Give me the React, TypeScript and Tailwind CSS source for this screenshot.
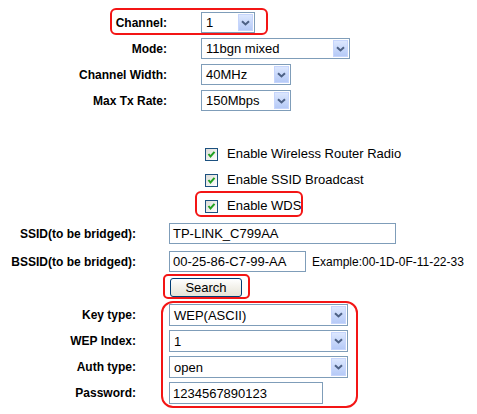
import React from 'react';

function Chevron() {
  return (
    <svg width="9" height="6" viewBox="0 0 9 6">
      <path d="M1 1.2 L4.5 4.5 L8 1.2" fill="none" stroke="#4d6185" strokeWidth="2" />
    </svg>
  );
}

function Select({ value, width, height }: { value: string; width: string; height: string }) {
  return (
    <div className={`${width} ${height} flex items-center border border-[#7f9db9] bg-white`}>
      <span className="flex-1 pl-[4px] text-[13px] leading-none">{value}</span>
      <span className="mr-[1px] flex h-[calc(100%-2px)] w-[15px] items-center justify-center border border-[#c6d5fc] bg-linear-to-b from-[#dce7fe] to-[#b6caf7]">
        <Chevron />
      </span>
    </div>
  );
}

function TextBox({ value, width, height }: { value: string; width: string; height: string }) {
  return (
    <div className={`${width} ${height} flex items-center border border-[#7f9db9] bg-white pl-[3px] text-[13px] leading-none`}>
      {value}
    </div>
  );
}

function Checkbox() {
  return (
    <span className="flex h-[13px] w-[13px] items-center justify-center border border-[#1c5180] bg-linear-to-br from-[#dcdcd7] to-white">
      <svg width="9" height="9" viewBox="0 0 9 9">
        <path d="M1.5 4 L3.5 6.5 L7.5 1.8" fill="none" stroke="#21a121" strokeWidth="2" />
      </svg>
    </span>
  );
}

function TopRow({ label, children }: { label: string; children: React.ReactNode }) {
  return (
    <div className="flex h-[21px] items-center">
      <div className="w-[167px] text-right text-[12px] font-bold">{label}</div>
      <div className="ml-[34px] flex h-full">{children}</div>
    </div>
  );
}

function BottomRow({ label, h, children }: { label: string; h: string; children: React.ReactNode }) {
  return (
    <div className={`flex ${h} items-center`}>
      <div className="w-[136px] text-right text-[12px] font-bold">{label}</div>
      <div className="ml-[33px] flex h-full items-center">{children}</div>
    </div>
  );
}

function CheckRow({ label }: { label: string }) {
  return (
    <div className="flex h-[26px] items-center pl-[205px]">
      <Checkbox />
      <span className="ml-[9px] text-[13px]">{label}</span>
    </div>
  );
}

export default function App() {
  return (
    <div className="relative h-[414px] w-[477px] overflow-hidden bg-white font-['Liberation_Sans',Arial,sans-serif] text-black">
      <div className="flex flex-col gap-[5px] pt-[12px]">
        <TopRow label="Channel:">
          <Select value="1" width="w-[54px]" height="h-[21px]" />
        </TopRow>
        <TopRow label="Mode:">
          <Select value="11bgn mixed" width="w-[149px]" height="h-[21px]" />
        </TopRow>
        <TopRow label="Channel Width:">
          <Select value="40MHz" width="w-[90px]" height="h-[21px]" />
        </TopRow>
        <TopRow label="Max Tx Rate:">
          <Select value="150Mbps" width="w-[90px]" height="h-[21px]" />
        </TopRow>
      </div>

      <div className="mt-[30px] flex flex-col">
        <CheckRow label="Enable Wireless Router Radio" />
        <CheckRow label="Enable SSID Broadcast" />
        <CheckRow label="Enable WDS" />
      </div>

      <div className="mt-[4px] flex flex-col gap-[7px]">
        <BottomRow label="SSID(to be bridged):" h="h-[21px]">
          <TextBox value="TP-LINK_C799AA" width="w-[227px]" height="h-[21px]" />
        </BottomRow>
        <BottomRow label="BSSID(to be bridged):" h="h-[21px]">
          <TextBox value="00-25-86-C7-99-AA" width="w-[137px]" height="h-[21px]" />
          <span className="ml-[6px] text-[12px]">Example:00-1D-0F-11-22-33</span>
        </BottomRow>
      </div>

      <div className="mt-[6px] flex pl-[170px]">
        <button className="flex h-[19px] w-[72px] items-center justify-center rounded-[3px] border border-[#003c74] bg-linear-to-b from-white to-[#e6e3d6] text-[13px] leading-none">
          Search
        </button>
      </div>

      <div className="mt-[7px] flex flex-col gap-[4px]">
        <BottomRow label="Key type:" h="h-[22px]">
          <Select value="WEP(ASCII)" width="w-[179px]" height="h-[22px]" />
        </BottomRow>
        <BottomRow label="WEP Index:" h="h-[22px]">
          <Select value="1" width="w-[179px]" height="h-[22px]" />
        </BottomRow>
        <BottomRow label="Auth type:" h="h-[22px]">
          <Select value="open" width="w-[179px]" height="h-[22px]" />
        </BottomRow>
        <BottomRow label="Password:" h="h-[22px]">
          <TextBox value="1234567890123" width="w-[154px]" height="h-[22px]" />
        </BottomRow>
      </div>

      {/* red annotation marks */}
      <div className="pointer-events-none absolute left-[110px] top-[8px] h-[27px] w-[158px] rounded-[6px] border-2 border-[#f31515]" />
      <div className="pointer-events-none absolute left-[195px] top-[191px] h-[26px] w-[108px] rounded-[6px] border-2 border-[#f31515]" />
      <div className="pointer-events-none absolute left-[163px] top-[274px] h-[25px] w-[87px] rounded-[5px] border-2 border-[#f31515]" />
      <div className="pointer-events-none absolute left-[161px] top-[301px] h-[107px] w-[197px] rounded-[12px] border-2 border-[#f31515]" />
    </div>
  );
}
